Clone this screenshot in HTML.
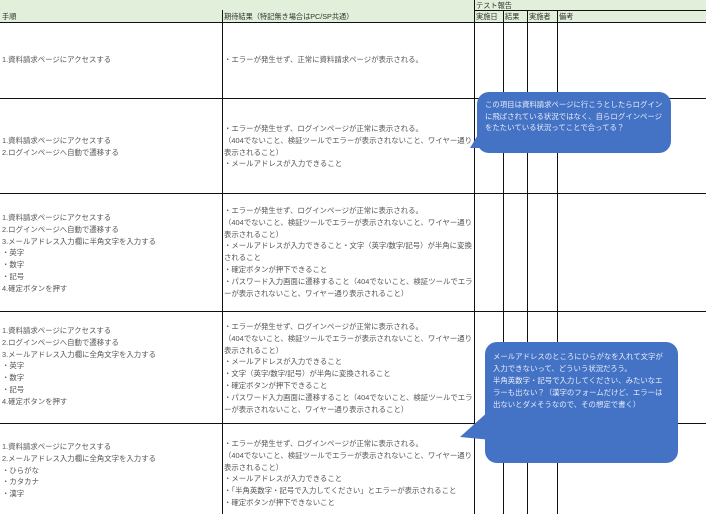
<!DOCTYPE html>
<html><head><meta charset="utf-8"><style>
body{margin:0;width:706px;height:514px;background:#fff;position:relative;overflow:hidden;font-family:"Liberation Sans","Noto Sans CJK JP",sans-serif;}
.t{position:absolute;font-size:7.4px;line-height:11.8px;color:#555;white-space:nowrap}
.h{position:absolute;font-size:7.2px;color:#333;white-space:nowrap}
.l{position:absolute;background:#111}
.b{position:absolute;background:#4472c4;border-radius:12px;color:#e8eefa;font-size:7.4px;line-height:11.5px;padding:6px 8px;box-sizing:border-box;white-space:nowrap}
</style></head><body>
<div style="position:absolute;left:0;top:0;width:706px;height:22px;background:#e2efda"></div>
<div class="h" style="left:476px;top:1px">テスト報告</div>
<div class="h" style="left:2px;top:12px">手順</div>
<div class="h" style="left:224px;top:12px">期待結果（特記無き場合はPC/SP共通）</div>
<div class="h" style="left:476px;top:12px">実施日</div>
<div class="h" style="left:505px;top:12px">結果</div>
<div class="h" style="left:529px;top:12px">実施者</div>
<div class="h" style="left:559px;top:12px">備考</div>
<div class="l" style="left:474px;top:10px;width:232px;height:1px"></div>
<div class="l" style="left:0;top:22px;width:706px;height:1px"></div>
<div class="l" style="left:0;top:98px;width:706px;height:1px"></div>
<div class="l" style="left:0;top:193px;width:706px;height:1px"></div>
<div class="l" style="left:0;top:311px;width:706px;height:1px"></div>
<div class="l" style="left:0;top:423px;width:706px;height:1px"></div>
<div class="l" style="left:222px;top:10px;width:1px;height:504px"></div>
<div class="l" style="left:474px;top:0;width:1px;height:514px"></div>
<div class="l" style="left:503px;top:10px;width:1px;height:504px"></div>
<div class="l" style="left:527px;top:10px;width:1px;height:504px"></div>
<div class="l" style="left:557px;top:10px;width:1px;height:504px"></div>

<div class="t" style="left:2px;top:54px">1.資料請求ページにアクセスする</div>
<div class="t" style="left:224px;top:54px">・エラーが発生せず、正常に資料請求ページが表示される。</div>

<div class="t" style="left:2px;top:135px">1.資料請求ページにアクセスする<br>2.ログインページへ自動で遷移する</div>
<div class="t" style="left:224px;top:123px">・エラーが発生せず、ログインページが正常に表示される。<br>（404でないこと、検証ツールでエラーが表示されないこと、ワイヤー通り<br>表示されること）<br>・メールアドレスが入力できること</div>

<div class="t" style="left:2px;top:212px">1.資料請求ページにアクセスする<br>2.ログインページへ自動で遷移する<br>3.メールアドレス入力欄に半角文字を入力する<br>・英字<br>・数字<br>・記号<br>4.確定ボタンを押す</div>
<div class="t" style="left:224px;top:205px">・エラーが発生せず、ログインページが正常に表示される。<br>（404でないこと、検証ツールでエラーが表示されないこと、ワイヤー通り<br>表示されること）<br>・メールアドレスが入力できること・文字（英字/数字/記号）が半角に変換<br>されること<br>・確定ボタンが押下できること<br>・パスワード入力画面に遷移すること（404でないこと、検証ツールでエラ<br>ーが表示されないこと、ワイヤー通り表示されること）</div>

<div class="t" style="left:2px;top:325px">1.資料請求ページにアクセスする<br>2.ログインページへ自動で遷移する<br>3.メールアドレス入力欄に全角文字を入力する<br>・英字<br>・数字<br>・記号<br>4.確定ボタンを押す</div>
<div class="t" style="left:224px;top:321px">・エラーが発生せず、ログインページが正常に表示される。<br>（404でないこと、検証ツールでエラーが表示されないこと、ワイヤー通り<br>表示されること）<br>・メールアドレスが入力できること<br>・文字（英字/数字/記号）が半角に変換されること<br>・確定ボタンが押下できること<br>・パスワード入力画面に遷移すること（404でないこと、検証ツールでエラ<br>ーが表示されないこと、ワイヤー通り表示されること）</div>

<div class="t" style="left:2px;top:441px">1.資料請求ページにアクセスする<br>2.メールアドレス入力欄に全角文字を入力する<br>・ひらがな<br>・カタカナ<br>・漢字</div>
<div class="t" style="left:224px;top:438px">・エラーが発生せず、ログインページが正常に表示される。<br>（404でないこと、検証ツールでエラーが表示されないこと、ワイヤー通り<br>表示されること）<br>・メールアドレスが入力できること<br>・「半角英数字・記号で入力してください」とエラーが表示されること<br>・確定ボタンが押下できないこと</div>

<svg style="position:absolute;left:0;top:0" width="706" height="514">
<polygon points="470,148 482,128 490,148" fill="#4472c4"/>
<polygon points="460,437 490,410 492,440" fill="#4472c4"/>
</svg>
<div class="b" style="left:477px;top:92px;width:194px;height:61px;padding-top:7px">この項目は資料請求ページに行こうとしたらログイン<br>に飛ばされている状況ではなく、自らログインページ<br>をたたいている状況ってことで合ってる？</div>
<div class="b" style="left:485px;top:342px;width:193px;height:121px;padding-top:9px;line-height:12px">メールアドレスのところにひらがなを入れて文字が<br>入力できないって、どういう状況だろう。<br>半角英数字・記号で入力してください、みたいなエ<br>ラーも出ない？（漢字のフォームだけど、エラーは<br>出ないとダメそうなので、その想定で書く）</div>
</body></html>
